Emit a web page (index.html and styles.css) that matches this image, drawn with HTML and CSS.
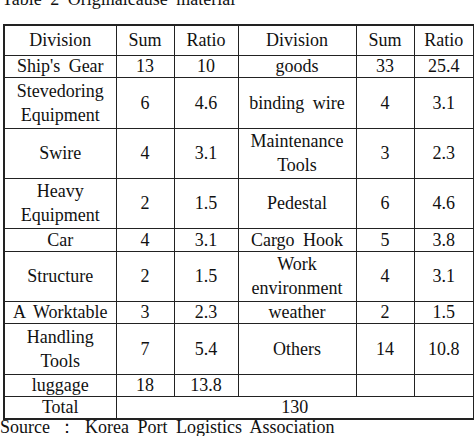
FILE: index.html
```html
<!DOCTYPE html>
<html>
<head>
<meta charset="utf-8">
<link rel="stylesheet" href="styles.css">
</head>
<body>
<div class="caption">Table 2 Originalcause material</div>
<table class="data">
  <colgroup>
    <col class="c1"><col class="c2"><col class="c3"><col class="c4"><col class="c5"><col class="c6">
  </colgroup>
  <tr class="head">
    <td>Division</td><td>Sum</td><td>Ratio</td><td>Division</td><td>Sum</td><td>Ratio</td>
  </tr>
  <tr class="single">
    <td>Ship's Gear</td><td>13</td><td>10</td><td>goods</td><td>33</td><td>25.4</td>
  </tr>
  <tr class="double wide">
    <td>Stevedoring<br>Equipment</td><td>6</td><td>4.6</td><td>binding wire</td><td>4</td><td>3.1</td>
  </tr>
  <tr class="double">
    <td>Swire</td><td>4</td><td>3.1</td><td>Maintenance<br>Tools</td><td>3</td><td>2.3</td>
  </tr>
  <tr class="double">
    <td>Heavy<br>Equipment</td><td>2</td><td>1.5</td><td>Pedestal</td><td>6</td><td>4.6</td>
  </tr>
  <tr class="single tall">
    <td>Car</td><td>4</td><td>3.1</td><td>Cargo Hook</td><td>5</td><td>3.8</td>
  </tr>
  <tr class="double">
    <td>Structure</td><td>2</td><td>1.5</td><td>Work<br>environment</td><td>4</td><td>3.1</td>
  </tr>
  <tr class="single">
    <td>A Worktable</td><td>3</td><td>2.3</td><td>weather</td><td>2</td><td>1.5</td>
  </tr>
  <tr class="double wide">
    <td>Handling<br>Tools</td><td>7</td><td>5.4</td><td>Others</td><td>14</td><td>10.8</td>
  </tr>
  <tr class="single">
    <td>luggage</td><td>18</td><td>13.8</td><td></td><td></td><td></td>
  </tr>
  <tr class="single tall">
    <td>Total</td><td colspan="5">130</td>
  </tr>
</table>
<div class="source">Source ： Korea Port Logistics Association</div>
</body>
</html>
```
FILE: styles.css
```css
html, body {
  margin: 0;
  padding: 0;
  background: #ffffff;
}
body {
  font-family: "Liberation Serif", "Times New Roman", serif;
  font-size: 18px;
  color: #111111;
  width: 474px;
  height: 436px;
  overflow: hidden;
}
.caption {
  margin-top: -11px;
  height: 20px;
  line-height: 20px;
  padding-left: 2px;
  margin-bottom: 15px;
  word-spacing: 4px;
  white-space: nowrap;
}
.data {
  border-collapse: collapse;
  margin-left: 3px;
  width: 470px;
  table-layout: fixed;
  border: 2px solid #222222;
}
.data td {
  border: 1px solid #222222;
  padding: 0;
  text-align: center;
  vertical-align: middle;
  word-spacing: 4px;
  white-space: nowrap;
  line-height: 24px;
}
.c1 { width: 112px; }
.c2 { width: 58px; }
.c3 { width: 64px; }
.c4 { width: 118px; }
.c5 { width: 58px; }
.c6 { width: 60px; }
.head { height: 30px; }
.single { height: 22px; }
.single td { line-height: 20px; }
.tall { height: 23px; }
.double { height: 50px; }
.double.wide { height: 51px; }
.source {
  margin-top: -2px;
  padding-left: 0;
  line-height: 18px;
  word-spacing: 4px;
  white-space: nowrap;
}
```
